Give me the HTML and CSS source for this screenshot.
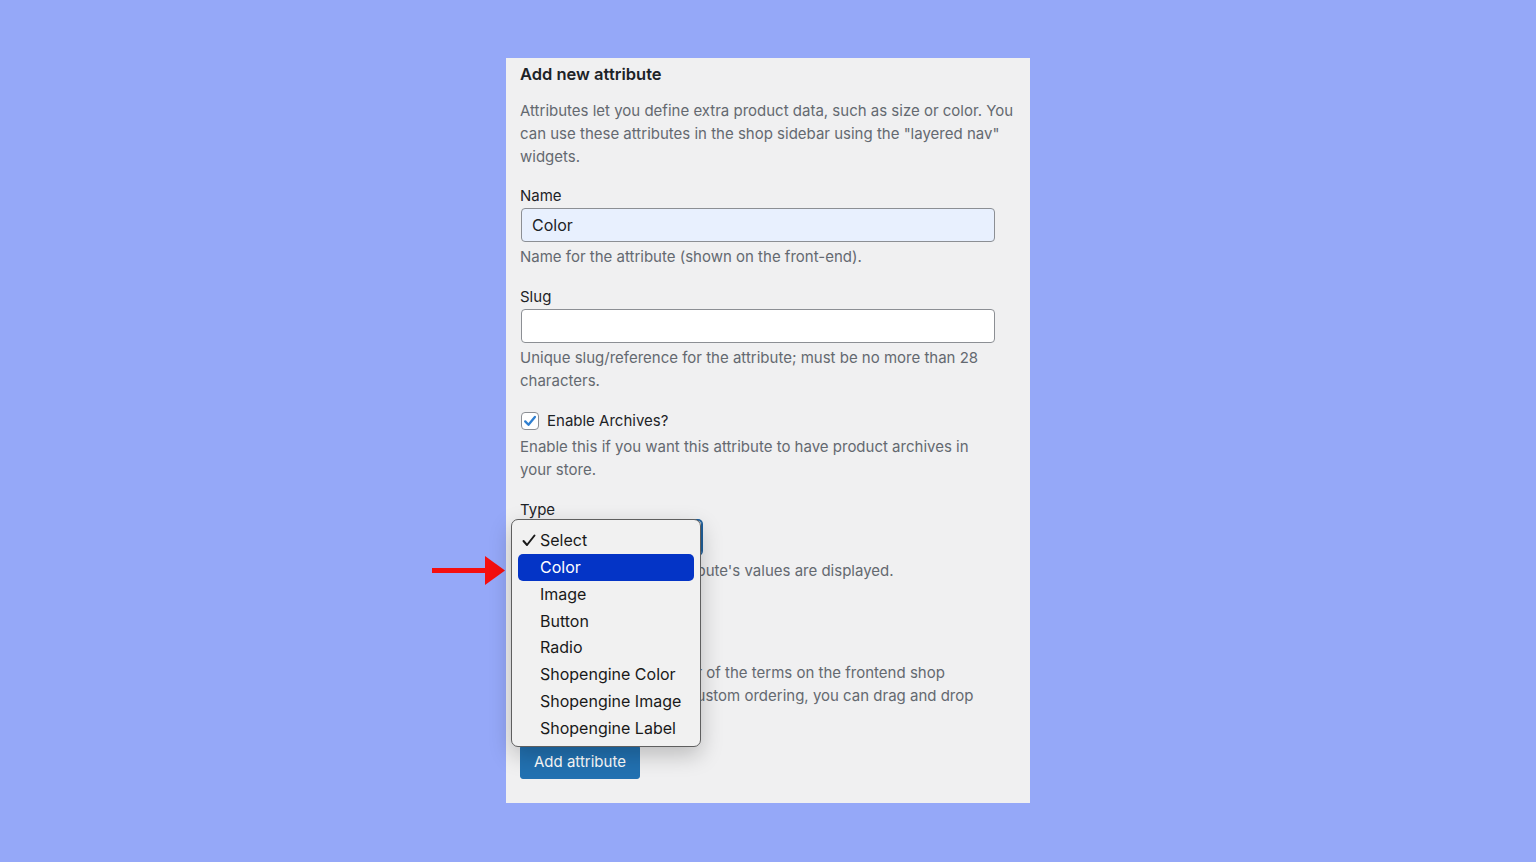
FILE: index.html
```html
<!DOCTYPE html>
<html lang="en">
<head>
<meta charset="utf-8">
<title>Add new attribute</title>
<link rel="stylesheet" href="styles.css">
</head>
<body>
<div class="stage">
  <svg class="pointer" width="80" height="32" viewBox="0 0 80 32" aria-hidden="true">
    <line x1="2" y1="15.5" x2="58" y2="15.5" stroke="#f50f0f" stroke-width="5"/>
    <polygon points="55,1 75,15.5 55,30" fill="#f50f0f"/>
  </svg>
  <div class="panel">
    <h2 class="title">Add new attribute</h2>
    <p class="desc intro">Attributes let you define extra product data, such as size or color. You can use these attributes in the shop sidebar using the "layered nav" widgets.</p>

    <div class="field">
      <label class="label">Name</label>
      <div class="input filled">Color</div>
      <p class="desc">Name for the attribute (shown on the front-end).</p>
    </div>

    <div class="field">
      <label class="label">Slug</label>
      <div class="input"></div>
      <p class="desc">Unique slug/reference for the attribute; must be no more than 28 characters.</p>
    </div>

    <div class="field">
      <div class="check-row">
        <span class="checkbox">
          <svg width="14" height="14" viewBox="0 0 14 14" aria-hidden="true"><path d="M2.2 7.4 L5.5 10.8 L11.9 3" fill="none" stroke="#2f7fd0" stroke-width="2.3" stroke-linecap="round" stroke-linejoin="round"/></svg>
        </span>
        <span class="label">Enable Archives?</span>
      </div>
      <p class="desc tight">Enable this if you want this attribute to have product archives in your store.</p>
    </div>

    <div class="field">
      <label class="label">Type</label>
      <div class="select focused"></div>
      <p class="desc">Determines how this attribute's values are displayed.</p>
    </div>

    <div class="field">
      <label class="label">Default sort order</label>
      <div class="select sort">Custom ordering</div>
      <p class="desc">Determines the sort order of the terms on the frontend shop product pages. If using custom ordering, you can drag and drop the terms in this attribute.</p>
    </div>

    <button class="button">Add attribute</button>

    <ul class="menu">
      <li class="item"><svg class="tick" width="14" height="13" viewBox="0 0 14 13" aria-hidden="true"><path d="M1.5 7 L5 11 L12.5 1.5" fill="none" stroke="#1a1a1a" stroke-width="2" stroke-linecap="round" stroke-linejoin="round"/></svg>Select</li>
      <li class="item active">Color</li>
      <li class="item">Image</li>
      <li class="item">Button</li>
      <li class="item">Radio</li>
      <li class="item">Shopengine Color</li>
      <li class="item">Shopengine Image</li>
      <li class="item">Shopengine Label</li>
    </ul>
  </div>
</div>
</body>
</html>
```

FILE: styles.css
```css
* { box-sizing: border-box; }

html, body {
  margin: 0;
  padding: 0;
  background: #95a8f8;
}

body {
  font-family: Inter, "Noto Sans", "Liberation Sans", sans-serif;
  color: #1d2327;
}

.stage {
  position: relative;
  width: 1536px;
  height: 862px;
  display: flex;
  justify-content: center;
  padding-top: 58px;
}

.pointer {
  position: absolute;
  left: 430px;
  top: 555px;
}

.panel {
  position: relative;
  width: 524px;
  height: 745px;
  background: #f0f0f1;
  padding: 5px 14px 0 14px;
}

.title {
  margin: 0;
  font-size: 16.5px;
  line-height: 22px;
  font-weight: 600;
  color: #1d2327;
}

.desc {
  margin: 0;
  font-size: 15px;
  line-height: 23px;
  color: #646970;
  width: 470px;
}

.intro {
  margin-top: 14px;
  width: 496px;
}

.field {
  margin-top: 19px;
}

.field:first-of-type {
  margin-top: 18px;
}

.label {
  display: block;
  font-size: 15px;
  line-height: 20px;
  color: #1d2327;
}

.input {
  margin: 2px 0 3px 1px;
  width: 474px;
  height: 34px;
  background: #fff;
  border: 1px solid #8c8f94;
  border-radius: 4px;
  padding: 0 10px;
  font-size: 16px;
  line-height: 32px;
  color: #1d2327;
}

.input.filled {
  background: #e8f0fe;
}

.check-row {
  display: flex;
  align-items: center;
  height: 20px;
  gap: 8px;
}

.check-row .label {
  display: inline;
}

.checkbox {
  width: 18px;
  height: 18px;
  margin-left: 1px;
  background: #fff;
  border: 1px solid #8c8f94;
  border-radius: 4px;
  display: flex;
  align-items: center;
  justify-content: center;
}

.tight {
  margin-top: 4px;
}

.select {
  margin: 0 0 4px 0;
  width: 182px;
  height: 35px;
  background: #fff;
  border: 1px solid #8c8f94;
  border-radius: 4px;
  padding: 0 10px;
  font-size: 15px;
  line-height: 33px;
  color: #2c3338;
}

.select.focused {
  border-color: #1f5f9a;
  box-shadow: 0 0 0 1px #1f5f9a;
}

.select.sort {
  width: 176px;
  margin-top: 1px;
  margin-bottom: 4px;
}

.button {
  display: block;
  margin-top: 15px;
  height: 34px;
  padding: 0 13px;
  background: #2271b1;
  border: 1px solid #2271b1;
  border-radius: 3px;
  color: #fff;
  font-family: inherit;
  font-size: 15px;
  line-height: 32px;
}

.menu {
  position: absolute;
  left: 5px;
  top: 461px;
  width: 190px;
  height: 228px;
  margin: 0;
  padding: 7px 6px 4px 6px;
  list-style: none;
  background: #f1f1f1;
  border: 1px solid #5f5f5f;
  border-radius: 7px;
  box-shadow: 0 8px 22px rgba(0, 0, 0, 0.22);
}

.item {
  position: relative;
  height: 26.85px;
  line-height: 26.85px;
  padding-left: 22px;
  font-size: 16px;
  color: #1a1a1a;
  border-radius: 5px;
  white-space: nowrap;
}

.item.active {
  background: #0434c6;
  color: #fff;
}

.tick {
  position: absolute;
  left: 4px;
  top: 7px;
}
```
